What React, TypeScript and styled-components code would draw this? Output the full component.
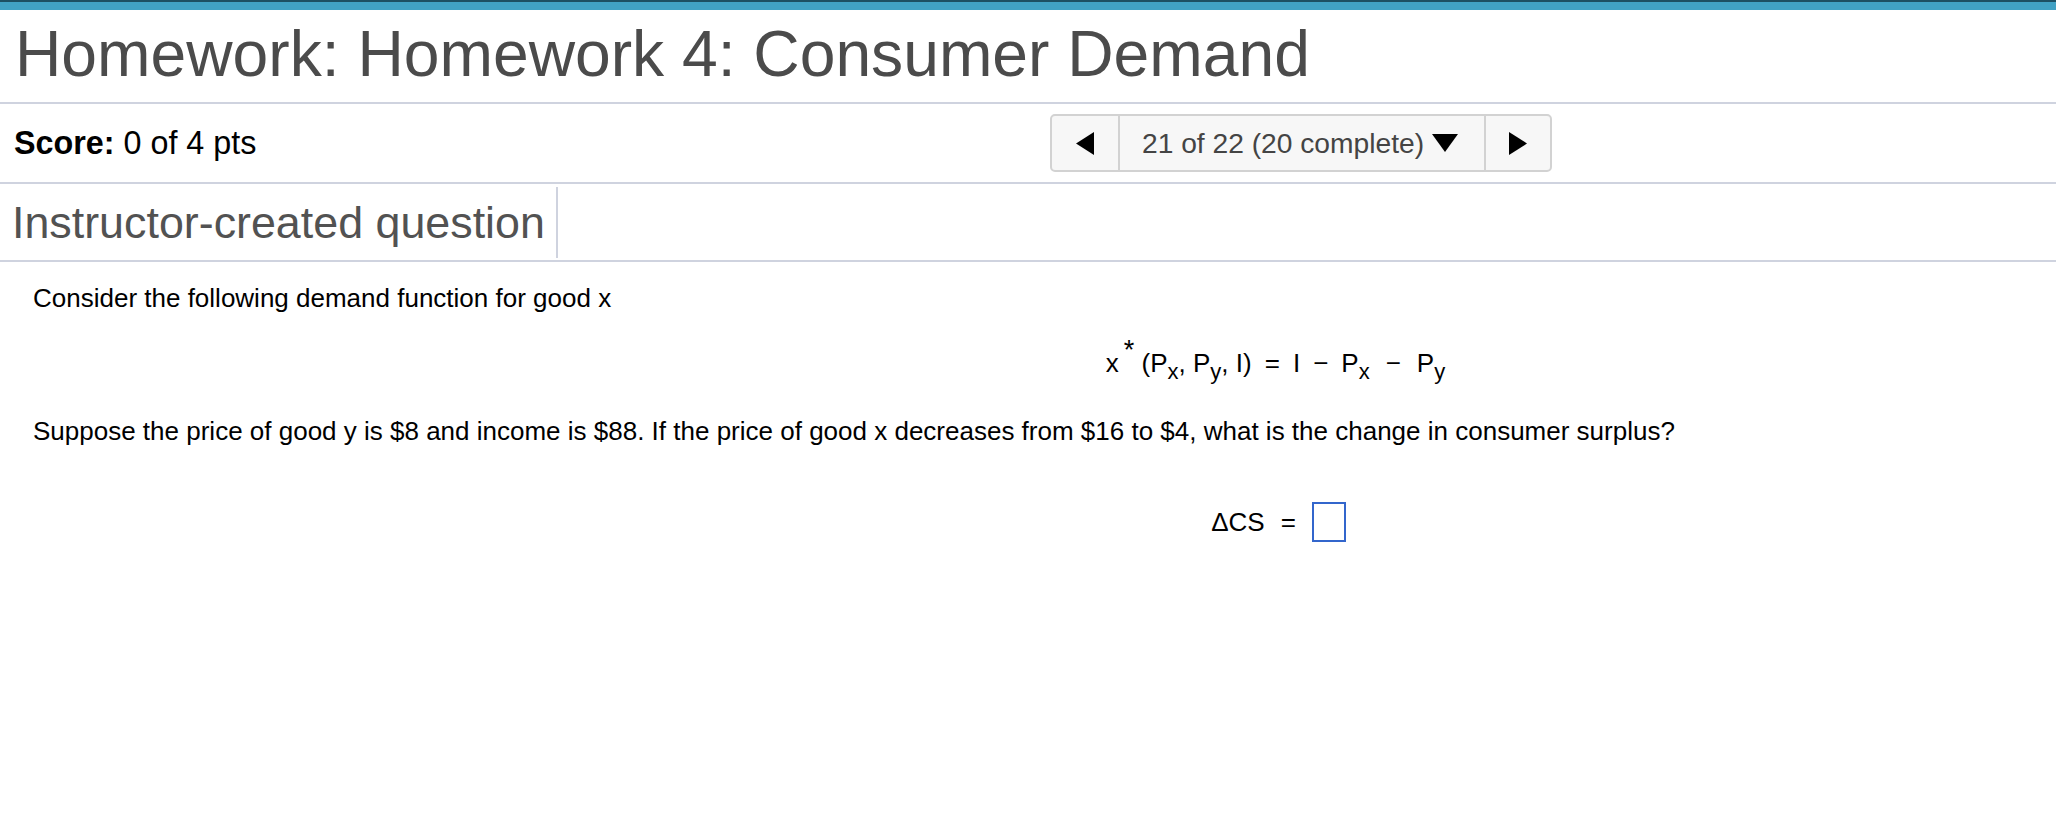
import React from "react";
import styled, { createGlobalStyle } from "styled-components";

const GlobalStyle = createGlobalStyle`
  html, body {
    margin: 0;
    padding: 0;
    background: #ffffff;
  }
  body {
    font-family: "Liberation Sans", Arial, Helvetica, sans-serif;
    color: #000;
  }
`;

const Page = styled.div`
  display: flex;
  flex-direction: column;
  width: 100%;
`;

const TopBar = styled.div`
  height: 8px;
  background: #41a1c4;
  border-top: 2px solid #1d4f63;
`;

const TitleBar = styled.header`
  padding: 12px 0 16px 15px;
  border-bottom: 2px solid #cfd3df;
`;

const Title = styled.h1`
  margin: 0;
  font-size: 64.2px;
  line-height: 64px;
  font-weight: 400;
  color: #4b4b4b;
`;

const ScoreRow = styled.div`
  display: flex;
  align-items: center;
  height: 78px;
  padding-left: 14px;
  border-bottom: 2px solid #cfd3df;
`;

const ScoreText = styled.div`
  flex: 0 0 1036px;
  font-size: 32.3px;
  line-height: 36px;
  color: #000;
`;

const Bold = styled.span`
  font-weight: 700;
`;

const Nav = styled.div`
  display: flex;
  height: 58px;
  border: 2px solid #d2d2d2;
  border-radius: 5px;
  background: #f7f7f7;
  box-sizing: border-box;
`;

const NavCell = styled.div<{ $w?: number; $divider?: boolean }>`
  display: flex;
  align-items: center;
  justify-content: center;
  width: ${(p) => (p.$w ? `${p.$w}px` : "auto")};
  border-left: ${(p) => (p.$divider ? "2px solid #d2d2d2" : "none")};
  box-sizing: border-box;
`;

const NavMiddle = styled.div`
  display: flex;
  align-items: center;
  gap: 8px;
  padding: 0 26px 0 22px;
  border-left: 2px solid #d2d2d2;
  font-size: 28.2px;
  color: #444;
`;

const Tri = styled.svg`
  display: block;
  fill: #000;
`;

const HeadingRow = styled.div`
  display: flex;
  align-items: center;
  height: 76px;
  border-bottom: 2px solid #cfd3df;
`;

const Heading = styled.h2`
  margin: 0;
  display: flex;
  align-items: center;
  height: 71px;
  padding: 0 11px 0 12px;
  border-right: 2px solid #cfd3df;
  font-size: 44.8px;
  font-weight: 400;
  color: #525252;
`;

const Body = styled.section`
  display: flex;
  flex-direction: column;
  padding: 19px 0 0 33px;
  font-size: 26px;
  line-height: 34px;
`;

const Para = styled.p<{ $mt?: number }>`
  margin: ${(p) => p.$mt ?? 0}px 0 0 0;
`;

const MathColumn = styled.div<{ $mt?: number }>`
  display: flex;
  flex-direction: column;
  align-items: center;
  width: 341px;
  margin: ${(p) => p.$mt ?? 0}px 0 0 1072px;
`;

const Eq = styled.div`
  display: flex;
  align-items: baseline;
  height: 34px;
  white-space: nowrap;
  font-size: 26px;
  line-height: 34px;
`;

const Sub = styled.span`
  font-size: 22px;
  position: relative;
  top: 7px;
  line-height: 0;
`;

const Sup = styled.span`
  font-size: 27px;
  position: relative;
  top: -13px;
  line-height: 0;
  margin-left: 5px;
`;

const Op = styled.span<{ $l?: number; $r?: number }>`
  margin: 0 ${(p) => p.$r ?? 13}px 0 ${(p) => p.$l ?? 13}px;
`;

const AnswerRow = styled.div`
  display: flex;
  align-items: center;
  height: 40px;
  padding-left: 6px;
  font-size: 26px;
`;

const AnswerBox = styled.div`
  width: 34px;
  height: 40px;
  box-sizing: border-box;
  border: 2.5px solid #3366cc;
  background: #fff;
`;

export default function App() {
  return (
    <Page>
      <GlobalStyle />
      <TopBar />
      <TitleBar>
        <Title>Homework: Homework 4: Consumer Demand</Title>
      </TitleBar>
      <ScoreRow>
        <ScoreText>
          <Bold>Score:</Bold> 0 of 4 pts
        </ScoreText>
        <Nav>
          <NavCell $w={66}>
            <Tri width="18" height="23" viewBox="0 0 18 23">
              <polygon points="18,0 18,23 0,11.5" />
            </Tri>
          </NavCell>
          <NavMiddle>
            <span>21 of 22 (20 complete)</span>
            <Tri width="26" height="18" viewBox="0 0 26 18">
              <polygon points="0,0 26,0 13,18" />
            </Tri>
          </NavMiddle>
          <NavCell $w={66} $divider>
            <Tri width="18" height="23" viewBox="0 0 18 23">
              <polygon points="0,0 18,11.5 0,23" />
            </Tri>
          </NavCell>
        </Nav>
      </ScoreRow>
      <HeadingRow>
        <Heading>Instructor-created question</Heading>
      </HeadingRow>
      <Body>
        <Para>Consider the following demand function for good x</Para>
        <MathColumn $mt={31}>
          <Eq>
            <span>x</span>
            <Sup>*</Sup>
            <span>&nbsp;(P</span>
            <Sub>x</Sub>
            <span>, P</span>
            <Sub>y</Sub>
            <span>, I)</span>
            <Op>=</Op>
            <span>I</span>
            <Op>−</Op>
            <span>P</span>
            <Sub>x</Sub>
            <Op $l={16} $r={16}>−</Op>
            <span>P</span>
            <Sub>y</Sub>
          </Eq>
        </MathColumn>
        <Para $mt={34}>
          Suppose the price of good y is $8 and income is $88. If the price of good x decreases from $16 to $4, what is the
          change in consumer surplus?
        </Para>
        <MathColumn $mt={54}>
          <AnswerRow>
            <span>ΔCS</span>
            <Op $l={16} $r={16}>=</Op>
            <AnswerBox />
          </AnswerRow>
        </MathColumn>
      </Body>
    </Page>
  );
}
